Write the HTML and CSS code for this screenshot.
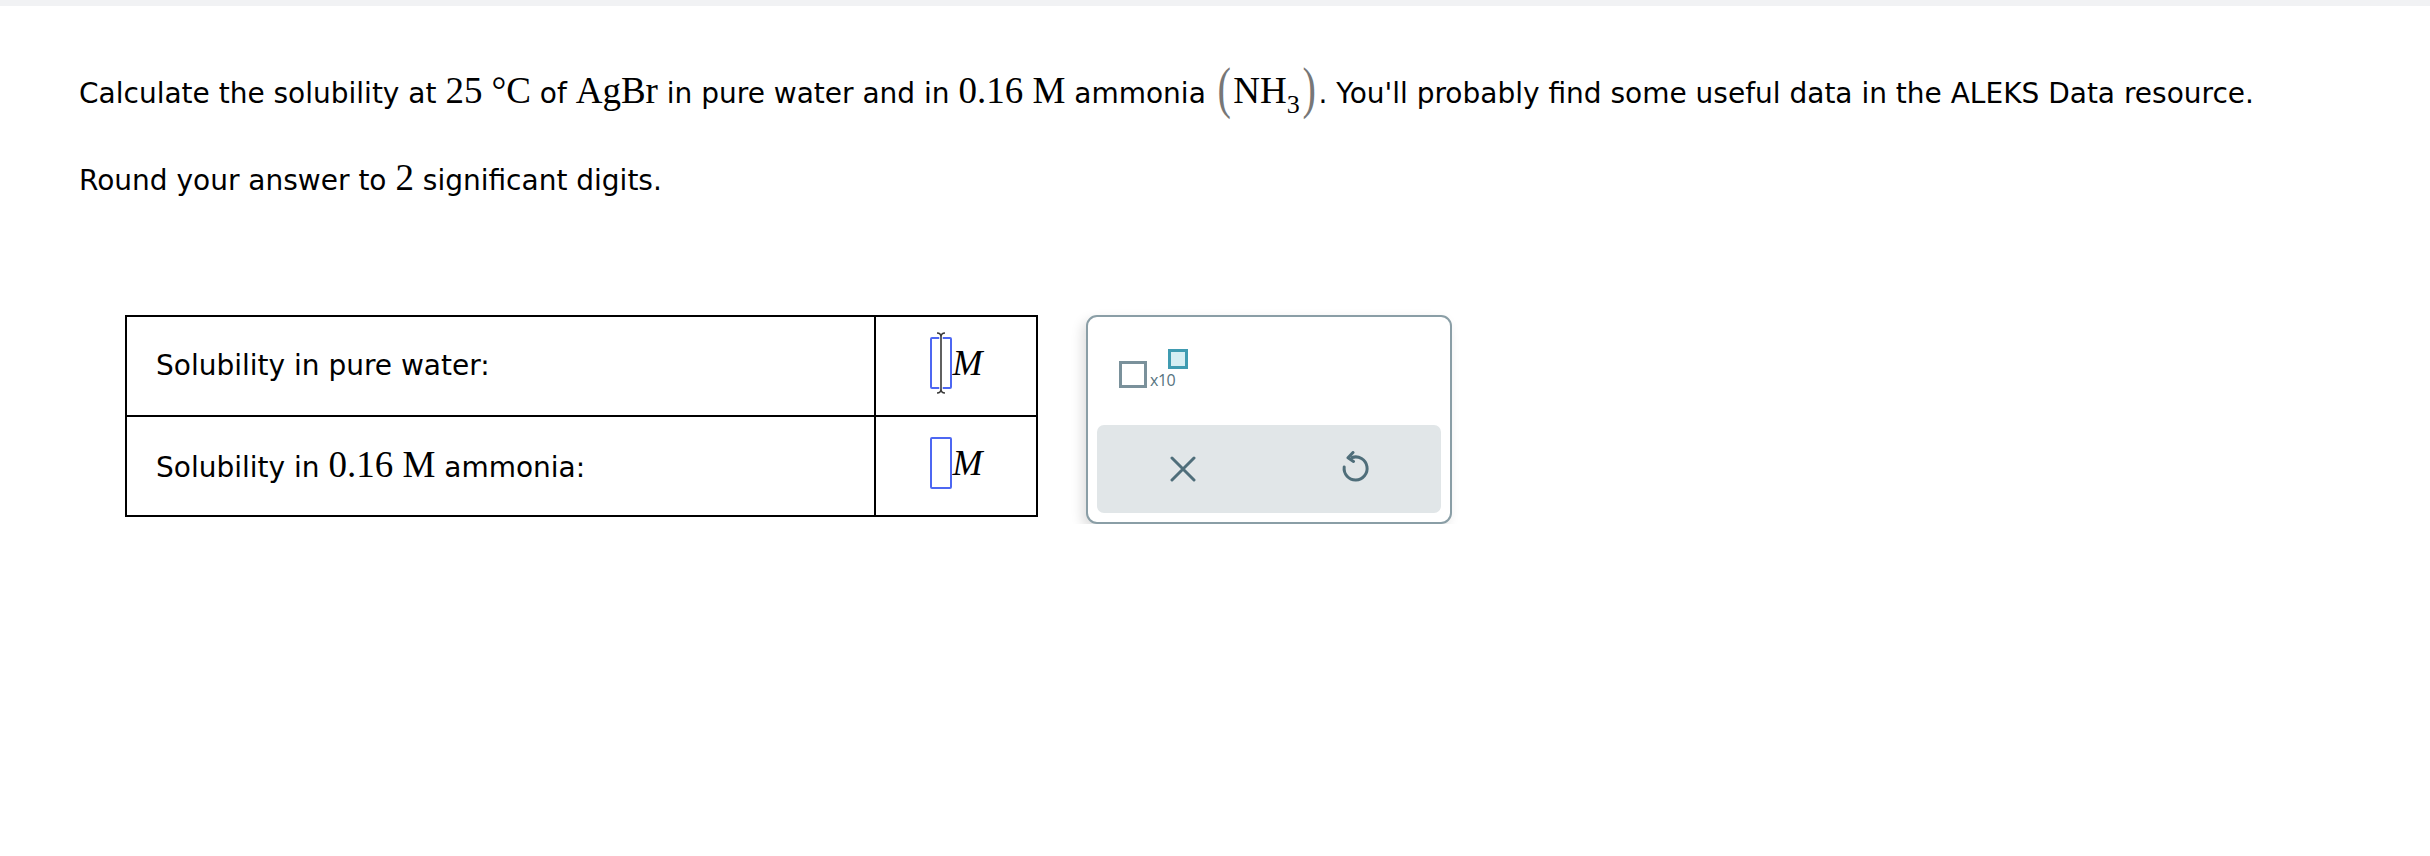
FILE: index.html
```html
<!DOCTYPE html>
<html lang="en">
<head>
<meta charset="utf-8">
<title>ALEKS</title>
<link rel="stylesheet" href="styles.css">
</head>
<body>
<div class="topbar"></div>
<main class="content">
  <p class="q">Calculate the solubility at <span class="m">25<span class="thin"></span>°C</span> of <span class="m">AgBr</span> in pure water and in <span class="m">0.16 M</span> ammonia <span class="m"><span class="paren">(</span>NH<sub>3</sub><span class="paren">)</span></span>. You'll probably find some useful data in the ALEKS Data resource.</p>
  <p class="q q2">Round your answer to <span class="m">2</span> significant digits.</p>

  <div class="work">
    <table class="answers">
      <tr>
        <td class="label">Solubility in pure water:</td>
        <td class="ans">
          <span class="field">
            <span class="box active">
              <svg class="ibeam" width="12" height="64" viewBox="0 0 12 64">
                <path d="M2 2 Q6 2 6 6 Q6 2 10 2 M6 6 V58 M2 62 Q6 62 6 58 Q6 62 10 62" fill="none" stroke="#fff" stroke-width="3.5"/>
                <path d="M2 2 Q6 2 6 6 Q6 2 10 2 M6 6 V58 M2 62 Q6 62 6 58 Q6 62 10 62" fill="none" stroke="#3a3a3a" stroke-width="1.6"/>
              </svg>
            </span><span class="unit">M</span>
          </span>
        </td>
      </tr>
      <tr>
        <td class="label">Solubility in <span class="m">0.16 M</span> ammonia:</td>
        <td class="ans">
          <span class="field"><span class="box"></span><span class="unit">M</span></span>
        </td>
      </tr>
    </table>

    <div class="keypad">
      <div class="kp-top">
        <div class="x10">
          <span class="sq-base"></span>
          <span class="x10-label">x10</span>
          <span class="sq-exp"></span>
        </div>
      </div>
      <div class="kp-actions">
        <div class="kp-btn">
          <svg width="26" height="26" viewBox="0 0 26 26">
            <path d="M2 2 L24 24 M24 2 L2 24" stroke="#4f6e7a" stroke-width="3" stroke-linecap="round" fill="none"/>
          </svg>
        </div>
        <div class="kp-btn">
          <svg width="30" height="36" viewBox="0 0 30 36">
            <path d="M12 6.5 A11.5 11.5 0 1 1 4.2 16" stroke="#4f6e7a" stroke-width="3" stroke-linecap="round" fill="none"/>
            <path d="M13 1.5 L8 6.8 L13.5 10.5" stroke="#4f6e7a" stroke-width="3" stroke-linecap="round" stroke-linejoin="round" fill="none"/>
          </svg>
        </div>
      </div>
    </div>
  </div>
</main>
</body>
</html>
```

FILE: styles.css
```css
html, body {
  margin: 0;
  padding: 0;
  background: #ffffff;
}

body {
  font-family: "DejaVu Sans", Verdana, sans-serif;
  font-size: 28px;
  color: #000;
}

.topbar {
  height: 6px;
  background: #f1f2f4;
}

.content {
  padding: 0 0 0 79px;
}

.q {
  margin: 0;
  line-height: 50px;
  padding-top: 60px;
}

.q2 {
  padding-top: 34px;
}

.m {
  font-family: "Liberation Serif", "Times New Roman", serif;
  font-size: 37px;
}

.thin {
  display: inline-block;
  width: 9px;
}

.m sub {
  font-size: 26px;
  vertical-align: -10px;
  line-height: 0;
}

.paren {
  display: inline-block;
  font-size: 56px;
  color: #777;
  transform: scaleX(0.72);
  vertical-align: -4px;
  line-height: 0;
}

.work {
  display: flex;
  align-items: flex-start;
  gap: 48px;
  margin: 109px 0 0 46px;
}

.answers {
  border-collapse: collapse;
  border: 2px solid #000;
}

.answers td {
  border: 2px solid #000;
  height: 98px;
  padding: 0;
}

.label {
  width: 718px;
  padding-left: 29px !important;
  line-height: 40px;
}

.ans {
  width: 160px;
  text-align: center;
}

.field {
  display: inline-flex;
  align-items: center;
  gap: 1px;
}

.box {
  position: relative;
  display: inline-block;
  width: 18px;
  height: 48px;
  border: 2px solid #4d67f2;
  border-radius: 2px;
}

.ibeam {
  position: absolute;
  left: 3px;
  top: -8px;
}

.unit {
  font-family: "Liberation Serif", "Times New Roman", serif;
  font-style: italic;
  font-size: 36px;
  line-height: 40px;
}

.keypad {
  width: 344px;
  padding: 0 9px 9px;
  border: 2px solid #8a9ea6;
  border-radius: 11px;
  background: #fff;
  box-shadow: -4px 5px 12px rgba(0, 0, 0, 0.13);
}

.kp-top {
  height: 108px;
  display: flex;
  align-items: flex-start;
  padding-left: 22px;
}

.x10 {
  display: flex;
  align-items: flex-start;
  margin-top: 32px;
}

.sq-base {
  width: 22px;
  height: 21px;
  margin-top: 12px;
  border: 3px solid #7a919b;
}

.x10-label {
  margin-top: 22px;
  margin-left: 3px;
  font-family: "Open Sans", "DejaVu Sans", sans-serif;
  font-size: 16px;
  line-height: 18px;
  color: #557380;
  letter-spacing: -0.5px;
}

.sq-exp {
  width: 14px;
  height: 14px;
  margin-left: -7px;
  border: 3px solid #3f9bb1;
  background: #d6eef3;
}

.kp-actions {
  height: 88px;
  display: grid;
  grid-template-columns: 1fr 1fr;
  background: #e1e6e8;
  border-radius: 7px;
}

.kp-btn {
  display: flex;
  align-items: center;
  justify-content: center;
}
```
